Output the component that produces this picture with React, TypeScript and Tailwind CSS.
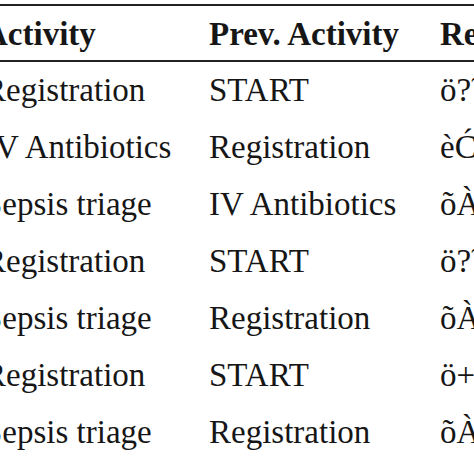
const rows = [
  ['Registration', 'START', 'ö?˜'],
  ['IV Antibiotics', 'Registration', 'èĆ'],
  ['Sepsis triage', 'IV Antibiotics', 'õÀ'],
  ['Registration', 'START', 'ö?˜'],
  ['Sepsis triage', 'Registration', 'õÀ'],
  ['Registration', 'START', 'ö+'],
  ['Sepsis triage', 'Registration', 'õÀ'],
];

export default function App() {
  return (
    <div className="w-[474px] h-[474px] overflow-hidden bg-white text-[#161616] font-['Liberation_Serif',serif] text-[33px]">
      <div className="pt-1">
        <div className="border-t-2 border-[#222]" />
        {/* Header */}
        <div className="grid grid-cols-[225px_231px_200px] ml-[-16px] pt-[2px] leading-[52px] font-bold whitespace-nowrap">
          <div>Activity</div>
          <div>Prev. Activity</div>
          <div>Resource</div>
        </div>
        <div className="border-t-2 border-[#222]" />
        {/* Body */}
        {rows.map((r, i) => (
          <div
            key={i}
            className="grid grid-cols-[225px_231px_200px] ml-[-16px] leading-[57px] whitespace-nowrap"
          >
            <div>{r[0]}</div>
            <div>{r[1]}</div>
            <div>{r[2]}</div>
          </div>
        ))}
      </div>
    </div>
  );
}
